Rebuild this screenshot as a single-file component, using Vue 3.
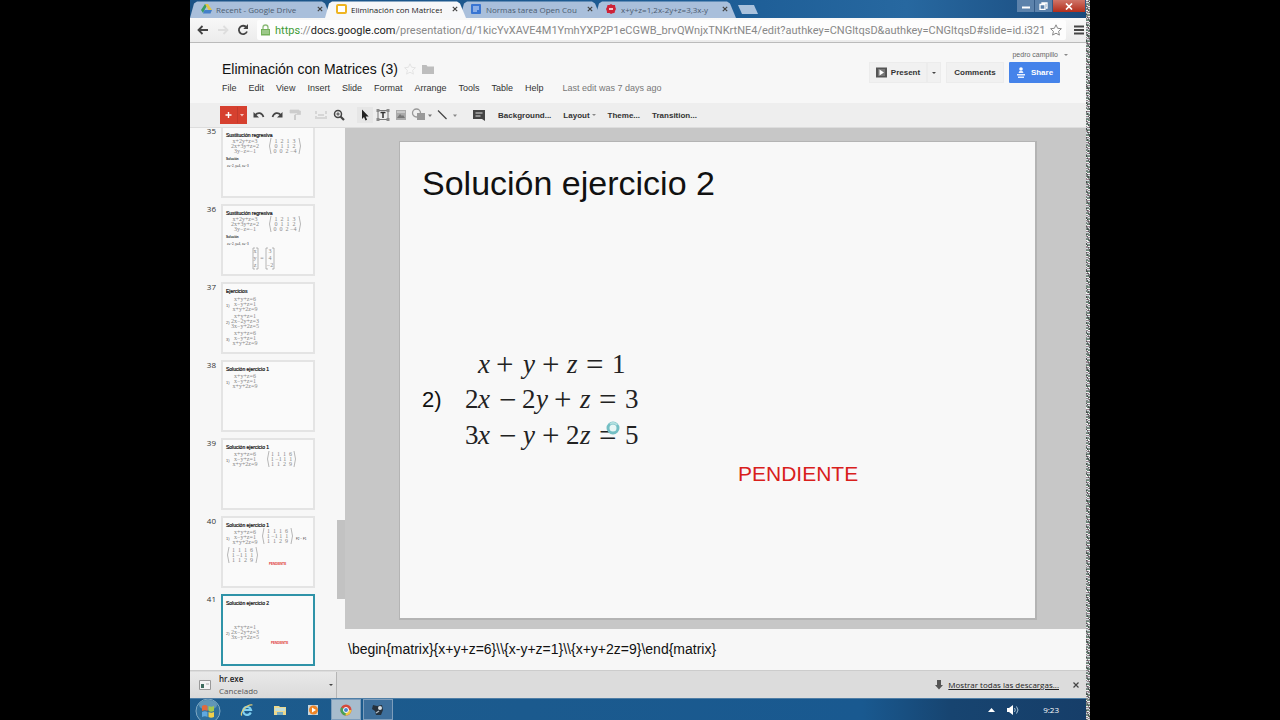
<script setup>
const tabs = [
  { title: 'Recent - Google Drive', icon: 'drive' },
  { title: 'Eliminación con Matrices', icon: 'slides', active: true },
  { title: 'Normas tarea Open Course', icon: 'docs' },
  { title: 'x+y+z=1,2x-2y+z=3,3x-y', icon: 'wolfram' }
]
const menus = ['File', 'Edit', 'View', 'Insert', 'Slide', 'Format', 'Arrange', 'Tools', 'Table', 'Help']

const sysA = ['x+2y+z=3', '2x+3y+z=2', '3y−z=−1']
const sysB = ['x+y+z=6', 'x−y+z=1', 'x+y+2z=9']
const sysC = ['x+y+z=1', '2x−2y+z=3', '3x−y+2z=5']
const matA = ['1  2  1  3', '0  1  1  2', '0  0  2 −4']
const matB = ['1  1  1  6', '1 −1 1  1', '1  1  2  9']
const thumbs = [
  { n: 35, title: 'Sustitución regresiva', systems: [{ x: 22, y: 15, rows: sysA }], matrices: [{ x: 46, y: 15, w: 32, rows: matA }], notes: true },
  { n: 36, title: 'Sustitución regresiva', systems: [{ x: 22, y: 15, rows: sysA }], matrices: [{ x: 46, y: 15, w: 32, rows: matA }], notes: true, vectors: true },
  { n: 37, title: 'Ejercicios', systems: [{ x: 22, y: 17, rows: sysB, label: '1)' }, { x: 22, y: 34, rows: sysC, label: '2)' }, { x: 22, y: 51, rows: sysB, label: '3)' }] },
  { n: 38, title: 'Solución ejercicio 1', systems: [{ x: 22, y: 16, rows: sysB, label: '1)' }] },
  { n: 39, title: 'Solución ejercicio 1', systems: [{ x: 22, y: 16, rows: sysB, label: '1)' }], matrices: [{ x: 44, y: 16, w: 29, rows: matB }] },
  { n: 40, title: 'Solución ejercicio 1', systems: [{ x: 22, y: 16, rows: sysB, label: '1)' }], matrices: [{ x: 39, y: 15, w: 31, rows: matB }, { x: 4, y: 34, w: 31, rows: matB }], arrow: true, pending: { x: 46, y: 47 } },
  { n: 41, title: 'Solución ejercicio 2', systems: [{ x: 22, y: 33, rows: sysC, label: '2)' }], pending: { x: 48, y: 48 }, selected: true }
]
const vector = [[33, 'x'], [47, '3']]
const vectorRows = [['x', '=', '3'], ['y', '=', '4'], ['z', '', '−2']]
const equations = [
  { y: 28, parts: [[17, 'x'], [35, '+'], [62, 'y'], [81, '+'], [106, 'z'], [125, '='], [151, '1']] },
  { y: 63, parts: [[4, '2'], [17, 'x'], [38, '−'], [61, '2'], [75, 'y'], [93, '+'], [119, 'z'], [138, '='], [164, '3']] },
  { y: 99, parts: [[4, '3'], [17, 'x'], [38, '−'], [62, 'y'], [81, '+'], [105, '2'], [119, 'z'], [138, '='], [164, '5']] }
]
const isVar = (s) => /[xyz]/.test(s)
const isOp = (s) => /[+−=]/.test(s)
</script>

<template>
  <div class="screen">
    <div class="desktop">
      <header class="tabstrip">
        <div v-for="t in tabs" :key="t.title" class="tab" :class="{ active: t.active }">
          <svg v-if="t.icon === 'drive'" width="11" height="10" viewBox="0 0 11 10"><path d="M4 0h3L3.500 6 2 9 0 6z" fill="#3a9e63" /><path d="M7 0l4 6H7.500L4 0z" fill="#e3c545" /><path d="M3.500 6H11L9.500 9.500H2z" fill="#4480c9" /></svg>
          <svg v-else-if="t.icon === 'slides'" width="11" height="10" viewBox="0 0 11 10"><rect x="1" y="1" width="9" height="8" rx="1" fill="#fff" stroke="#eeb422" stroke-width="2" /></svg>
          <svg v-else-if="t.icon === 'docs'" width="11" height="10" viewBox="0 0 11 10"><rect width="10" height="10" rx="1" fill="#3975d2" /><path d="M2 3h6M2 5h6M2 7h4" stroke="#dce8fb" /></svg>
          <svg v-else width="11" height="10" viewBox="0 0 11 10"><path d="M5 0l1.500 1L9 1l.3 2L10 5l-1 2-.5 2-2 .2L5 10l-1.500-1L1 9 .8 7 0 5l1-2L1.500 1l2 0z" fill="#ce2137" /><path d="M3 5h4" stroke="#fff" stroke-width="1.500" /></svg>
          <span class="tab-title">{{ t.title }}</span>
          <button class="tab-close" aria-label="Close tab"><svg width="6" height="6" viewBox="0 0 6 6"><path d="M.8.8l4.400 4.400M5.200.8L.8 5.200" stroke="#444" stroke-width="1.200" /></svg></button>
        </div>
        <button class="new-tab" aria-label="New tab"></button>
        <div class="window-controls">
          <button aria-label="Minimize"><svg width="8" height="8" viewBox="0 0 8 8"><path d="M0 5.500h8" stroke="#fff" stroke-width="2" /></svg></button>
          <button aria-label="Restore"><svg width="9" height="8" viewBox="0 0 9 8"><path d="M3 2V1h5v5H7M1 2.500h5v5H1z" fill="none" stroke="#fff" stroke-width="1.300" /></svg></button>
          <button class="close" aria-label="Close"><svg width="8" height="7" viewBox="0 0 8 7"><path d="M1 .5l6 6M7 .5l-6 6" stroke="#fff" stroke-width="1.700" /></svg></button>
        </div>
      </header>

      <nav class="navbar">
        <button aria-label="Back"><svg width="12" height="10" viewBox="0 0 12 10"><path d="M11 5H2M5.500 1L1.500 5l4 4" fill="none" stroke="#444" stroke-width="1.800" /></svg></button>
        <button aria-label="Forward"><svg width="12" height="10" viewBox="0 0 12 10"><path d="M1 5h9M6.500 1l4 4-4 4" fill="none" stroke="#dedede" stroke-width="1.800" /></svg></button>
        <button aria-label="Reload"><svg width="12" height="12" viewBox="0 0 12 12"><path d="M9.500 3.500A4.200 4.200 0 1 0 10 7.500" fill="none" stroke="#444" stroke-width="1.800" /><path d="M11 0v5H6.300z" fill="#444" /></svg></button>
        <div class="omnibox">
          <svg width="9" height="12" viewBox="0 0 9 12"><path d="M2 6V3.500a2.500 2.500 0 0 1 5 0V6" fill="none" stroke="#8dbb79" stroke-width="1.300" /><rect y="5" width="9" height="6.500" fill="#74b05a" /><path d="M1 7h7M1 9h7" stroke="#c4dfb8" /></svg>
          <a class="url" href="#"><span class="secure">https</span>://<span class="host">docs.google.com</span>/presentation/d/1kicYvXAVE4M1YmhYXP2P1eCGWB_brvQWnjxTNKrtNE4/edit?authkey=CNGltqsD&amp;authkey=CNGltqsD#slide=id.i321</a>
          <svg class="bookmark" width="12" height="12" viewBox="0 0 12 12"><path d="M6 .8l1.600 3.500 3.800.4-2.800 2.600.8 3.800L6 9.200l-3.400 1.900.8-3.800L.6 4.700l3.800-.4z" fill="#fff" stroke="#888" /></svg>
        </div>
        <button aria-label="Chrome menu"><svg width="10" height="10" viewBox="0 0 10 10"><path d="M0 1.500h10M0 5h10M0 8.500h10" stroke="#444" stroke-width="2" /></svg></button>
      </nav>

      <section class="doc-header">
        <div class="doc-main">
          <div class="doc-title">
            <h1>Eliminación con Matrices (3)</h1>
            <svg width="12" height="12" viewBox="0 0 12 12"><path d="M6 .8l1.600 3.500 3.800.4-2.800 2.600.8 3.800L6 9.200l-3.400 1.900.8-3.800L.6 4.700l3.800-.4z" fill="#f8f8f8" stroke="#e4e4e4" /></svg>
            <svg width="12" height="10" viewBox="0 0 12 10"><path d="M0 1h4.500l1 1.500H12V10H0z" fill="#bdbdbd" /></svg>
          </div>
          <div class="menubar">
            <button v-for="m in menus" :key="m">{{ m }}</button>
            <span class="last-edit">Last edit was 7 days ago</span>
          </div>
        </div>
        <div class="doc-side">
          <button class="user">pedro campillo <i class="caret"></i></button>
          <div class="actions">
            <div class="split">
              <button class="gray present"><svg width="11" height="11" viewBox="0 0 11 11"><path d="M0 .5h11v10H0z" fill="#555" /><path d="M2 2h7v7H2z" fill="#777" /><path d="M3.500 2.500l4.500 3-4.500 3z" fill="#fff" /></svg>Present</button>
              <button class="gray drop" aria-label="Present options"><i class="caret dark"></i></button>
            </div>
            <button class="gray comments">Comments</button>
            <button class="share"><svg width="10" height="12" viewBox="0 0 10 12"><circle cx="5" cy="2" r="1.800" fill="#fff" /><path d="M2.500 6l1-2h3l1 2zM1 7h8v1.500H1zM2 9.500h6V11H2z" fill="#e6efff" /></svg>Share</button>
          </div>
        </div>
      </section>

      <div class="toolbar">
        <button class="new-slide" aria-label="New slide"><svg width="25" height="16" viewBox="0 0 25 16"><path d="M7.500 5v6M4.500 8h6" stroke="#fff" stroke-width="1.400" /><path d="M16.500 0v16" stroke="#c23a2c" /><path d="M19 7h4l-2 2.500z" fill="#f6c5be" /></svg></button>
        <div class="group">
          <button aria-label="Undo"><svg width="16" height="16" viewBox="0 0 16 16"><path d="M4 8c3-3 7-2.500 8.500 2" fill="none" stroke="#444" stroke-width="1.700" /><path d="M2.500 5v5.500H8z" fill="#444" /></svg></button>
          <button aria-label="Redo"><svg width="16" height="16" viewBox="0 0 16 16"><path d="M12 8C9 5 5 5.500 3.500 10" fill="none" stroke="#444" stroke-width="1.700" /><path d="M13.500 5v5.500H8z" fill="#444" /></svg></button>
          <button aria-label="Paint format"><svg width="16" height="16" viewBox="0 0 16 16"><path d="M3 3h9v3H3zM12 4h1.500v3.500H8V9" fill="#ccc" stroke="#ccc" stroke-width=".7" /><path d="M7 8h2v5H7z" fill="#ccc" /></svg></button>
        </div>
        <div class="group">
          <button aria-label="Fit"><svg width="16" height="16" viewBox="0 0 16 16"><path d="M3 4v3M13 4v3M3 9v3M13 9v3M5 8h6M4 11h8" fill="none" stroke="#d6d6d6" stroke-width="2" /></svg></button>
          <button aria-label="Zoom"><svg width="16" height="16" viewBox="0 0 16 16"><circle cx="7" cy="7" r="3.500" fill="none" stroke="#444" stroke-width="1.500" /><path d="M5.300 7h3.400M7 5.300v3.400" stroke="#444" /><path d="M9.500 9.500l3.500 3.500" stroke="#444" stroke-width="2.200" /></svg></button>
        </div>
        <div class="group">
          <button class="pressed" aria-label="Select"><svg width="16" height="16" viewBox="0 0 16 16"><path d="M5 2.500v9.500l2-2 1.500 3.500 1.600-.7L8.700 9.500h3z" fill="#222" /></svg></button>
          <button aria-label="Text box"><svg width="16" height="16" viewBox="0 0 16 16"><path d="M3 3.500h10v9H3z" fill="none" stroke="#777" /><path d="M1.500 2h3v3h-3zM11.500 2h3v3h-3zM1.500 11h3v3h-3zM11.500 11h3v3h-3z" fill="#888" /><path d="M5.500 5.500h5M8 5.500v5.500" stroke="#333" stroke-width="1.500" /></svg></button>
          <button aria-label="Image"><svg width="16" height="16" viewBox="0 0 16 16"><path d="M3 3h10v10H3z" fill="#aaa" /><path d="M4 11l3-4 2 2 1-1 2 3z" fill="#777" /><path d="M4 4h8v2H4z" fill="#c8c8c8" /></svg></button>
          <button aria-label="Shape"><svg width="22" height="16" viewBox="0 0 22 16"><circle cx="5.500" cy="6" r="4" fill="#eee" stroke="#999" stroke-width="1.300" /><path d="M6 6h8v7H6z" fill="#999" /><path d="M17 7.500h4L19 10z" fill="#777" /></svg></button>
          <button aria-label="Line"><svg width="22" height="16" viewBox="0 0 22 16"><path d="M3 3.500l8.500 8.500" stroke="#444" stroke-width="1.300" /><path d="M18 7.500h4L20 10z" fill="#888" /></svg></button>
        </div>
        <button class="comment" aria-label="Comment"><svg width="16" height="16" viewBox="0 0 16 16"><path d="M2 3h12v11l-3-2H2z" fill="#444" /><path d="M4.500 6h7M4.500 9h5" stroke="#ddd" stroke-width="1.200" /></svg></button>
        <div class="labels">
          <button>Background...</button>
          <button>Layout <i class="caret"></i></button>
          <button>Theme...</button>
          <button>Transition...</button>
        </div>
      </div>

      <main class="workspace">
        <aside class="filmstrip">
          <ol>
            <li v-for="t in thumbs" :key="t.n">
              <span class="num">{{ t.n }}</span>
              <svg class="thumb" :class="{ selected: t.selected }" viewBox="0 0 90 68">
                <text class="t-title" x="3" y="9">{{ t.title }}</text>
                <g v-for="(s, i) in t.systems" :key="i">
                  <text v-if="s.label" class="t-label" x="3" :y="s.y + 6">{{ s.label }}</text>
                  <text v-for="(r, j) in s.rows" :key="j" class="t-eq" :x="s.x" :y="s.y + j * 5" text-anchor="middle">{{ r }}</text>
                </g>
                <g v-for="(m, i) in t.matrices" :key="'m' + i">
                  <path :d="`M${m.x + 2} ${m.y - 5}q-3 8 0 16M${m.x + m.w - 2} ${m.y - 5}q3 8 0 16`" class="bracket" />
                  <text v-for="(r, j) in m.rows" :key="j" class="t-eq" :x="m.x + m.w / 2" :y="m.y + j * 5" text-anchor="middle">{{ r }}</text>
                </g>
                <g v-if="t.notes">
                  <text class="t-note" x="3" y="32">Solución</text>
                  <text class="t-small" x="4" y="39">z=−2, y=4, x=−3</text>
                </g>
                <g v-if="t.vectors">
                  <path d="M32 42h-2v21h2M33 42h2v21h-2M45 42h-2v21h2M49 42h2v21h-2" class="bracket" />
                  <g v-for="(r, j) in vectorRows" :key="j" text-anchor="middle">
                    <text class="t-eq" x="32" :y="47 + j * 7">{{ r[0] }}</text>
                    <text v-if="j === 1" class="t-eq" x="39" :y="47 + j * 7">{{ r[1] }}</text>
                    <text class="t-eq" x="47" :y="47 + j * 7">{{ r[2] }}</text>
                  </g>
                </g>
                <text v-if="t.arrow" class="t-small" x="73" y="22">F2 − F1</text>
                <text v-if="t.pending" class="t-pending" :x="t.pending.x" :y="t.pending.y">PENDIENTE</text>
              </svg>
            </li>
          </ol>
          <div class="scroll-thumb"></div>
        </aside>

        <div class="editor">
          <div class="canvas">
            <article class="slide">
              <h2>Solución ejercicio 2</h2>
              <div class="exercise">
                <span>2)</span>
                <svg class="math" width="184" height="110" viewBox="0 0 184 110">
                  <g v-for="e in equations" :key="e.y">
                    <text v-for="p in e.parts" :key="p[0]" :class="{ var: isVar(p[1]), op: isOp(p[1]) }" :x="p[0]" :y="isOp(p[1]) ? e.y + 2 : e.y">{{ p[1] }}</text>
                  </g>
                  <circle cx="152" cy="83" r="5" fill="#e8f7f6" stroke="#74bfc4" stroke-width="3" /><path d="M149 79a5 5 0 0 1 7 1" fill="none" stroke="#b3e0e0" stroke-width="2" />
                </svg>
              </div>
              <p class="pending">PENDIENTE</p>
            </article>
          </div>
          <p class="speaker-notes">\begin{matrix}{x+y+z=6}\\{x-y+z=1}\\{x+y+2z=9}\end{matrix}</p>
        </div>
      </main>

      <div class="downloads">
        <button class="download">
          <svg width="12" height="10" viewBox="0 0 12 10"><path d="M.5.5h11v9H.5z" fill="#f4f4f4" stroke="#999" /><path d="M2 4h3v4H2z" fill="#3e6c5e" /><path d="M7 4h3" stroke="#aaa" /></svg>
          <span class="file"><b>hr.exe</b><span>Cancelado</span></span>
          <i class="caret dark"></i>
        </button>
        <a class="show-all" href="#"><svg width="8" height="10" viewBox="0 0 8 10"><path d="M2 0h4v5h2L4 9.500 0 5h2z" fill="#555" /></svg><span>Mostrar todas las descargas...</span></a>
        <button class="dismiss" aria-label="Close downloads"><svg width="6" height="6" viewBox="0 0 6 6"><path d="M.5.5l5 5M5.500.5l-5 5" stroke="#444" stroke-width="1.200" /></svg></button>
      </div>

      <footer class="taskbar">
        <button class="start" aria-label="Start"><svg width="28" height="22" viewBox="0 0 28 22"><circle cx="14" cy="12" r="12" fill="#2f6f9c" stroke="#7fa9c4" /><ellipse cx="14" cy="6" rx="9" ry="5" fill="#83b0ca" opacity=".6" /><path d="M8 7q3-2 5.500 0v5Q11 10.500 8 12z" fill="#e2693d" /><path d="M14.500 7q3 1.500 5.500 0v5q-3 1.500-5.500 0z" fill="#a3c94e" /><path d="M8 13q3-1.500 5.500 0v5Q11 16.500 8 18z" fill="#5fa8e0" /><path d="M14.500 13q3 1.500 5.500 0v5q-3 1.500-5.500 0z" fill="#f2cf4a" /></svg></button>
        <button class="launch" aria-label="Internet Explorer"><svg width="14" height="14" viewBox="0 0 14 14"><path d="M10.800 9.500A4 4 0 1 1 11 7H4" fill="none" stroke="#7fd0f2" stroke-width="2.200" /><path d="M2 12.500C-1 11 6 1 12.500 2" fill="none" stroke="#e3cc74" stroke-width="1.200" /></svg></button>
        <button class="launch" aria-label="Explorer"><svg width="14" height="14" viewBox="0 0 14 14"><path d="M1 3h5l1 1h6v8H1z" fill="#ecd98e" /><path d="M2 5h10v3H2z" fill="#c4dfd9" /><path d="M4 9h6v3H4z" fill="#76adc8" /></svg></button>
        <button class="launch" aria-label="Media player"><svg width="14" height="14" viewBox="0 0 14 14"><path d="M2 2h10v10H2z" fill="#c7d6dd" /><circle cx="7.500" cy="7" r="4.500" fill="#ed8527" /><path d="M6 4.500l4 2.500-4 2.500z" fill="#fff" /></svg></button>
        <button class="task lit" aria-label="Chrome"><svg width="12" height="12" viewBox="0 0 12 12"><circle cx="6" cy="6" r="5.500" fill="#d64a3c" /><path d="M6 6L1.200 3.200A5.500 5.500 0 0 0 6 11.500z" fill="#47a257" /><path d="M6 6h5.500A5.500 5.500 0 0 1 5.500 11.500z" fill="#efc941" /><circle cx="6" cy="6" r="2.500" fill="#4a83cc" stroke="#fff" /></svg></button>
        <button class="task" aria-label="Recorder"><svg width="14" height="12" viewBox="0 0 14 12"><path d="M2 1l4 1 5-1 1 5-2 5H5L4 7 1 5z" fill="#26313c" /><circle cx="9" cy="4" r="2" fill="#d9dfe3" /><path d="M5 9l3-2" stroke="#aab7c2" stroke-width="1.500" /></svg></button>
        <div class="tray">
          <svg width="7" height="4" viewBox="0 0 7 4"><path d="M0 4l3.500-4L7 4z" fill="#fff" /></svg>
          <svg width="12" height="10" viewBox="0 0 12 10"><path d="M0 3h2l4-3v10L2 7H0z" fill="#fff" /><path d="M7.500 3q1.500 2 0 4M9.500 1.500q3 3.500 0 7" fill="none" stroke="#a8c3d6" /></svg>
          <time>9:23</time>
        </div>
      </footer>
    </div>
    <div class="noise"></div>
  </div>
</template>

<style>
body {
  margin: 0;
  background: #000;
}
</style>

<style scoped>
* {
  box-sizing: border-box;
}
.screen {
  display: flex;
  min-height: 100vh;
  padding: 0 190px;
  background: #000;
  font-family: "Liberation Sans", Arial, sans-serif;
  color: #333;
}
.desktop {
  flex: 1;
  min-width: 0;
  display: flex;
  flex-direction: column;
  background: #f7f7f7;
}
.noise {
  width: 4px;
  background:
    repeating-linear-gradient(63deg, #0006 0 1px, #0000 1px 4px),
    repeating-linear-gradient(17deg, #888 0 1px, #cdd 1px 2px, #96808d 2px 3px, #eee 3px 4px, #678677 4px 5px);
}
button {
  display: flex;
  align-items: center;
  border: 0;
  padding: 0;
  background: none;
  font: inherit;
  color: inherit;
  white-space: nowrap;
}
svg {
  display: block;
  flex: none;
}
.caret {
  border: 2px solid transparent;
  border-top-color: #888;
  border-bottom: 0;
}
.caret.dark {
  border-top-color: #444;
}

.tabstrip {
  display: flex;
  height: 18px;
  background: linear-gradient(90deg, #1b5285, #1d5d96 60%, #2768a0 80%, #1a4a7c);
  font: 8px "Open Sans", "Noto Sans", sans-serif;
}
.tab {
  display: flex;
  align-items: center;
  width: 141px;
  margin-right: -6px;
  padding: 0 8px 0 11px;
  clip-path: polygon(0 100%, 4px 20%, 7px 8%, calc(100% - 9px) 8%, calc(100% - 6px) 20%, 100% 100%);
  background: #a9bfdb;
  color: #4c5c70;
}
.tab.active {
  z-index: 1;
  background: #f6f7f9;
  color: #222;
}
.tab-title {
  flex: 1;
  margin: 0 10px 0 4px;
  overflow: hidden;
  white-space: nowrap;
}
.new-tab {
  width: 20px;
  height: 9px;
  margin: 5px 0 0 8px;
  background: #a9c1dc;
  clip-path: polygon(0 0, 80% 0, 100% 100%, 20% 100%);
}
.window-controls {
  display: flex;
  height: 12px;
  margin-left: auto;
}
.window-controls button {
  width: 18px;
  justify-content: center;
  background: #5c82ab;
  border-right: 1px solid #345a86;
}
.window-controls .close {
  width: 33px;
  background: linear-gradient(#cf7468, #b22d1b);
}

.navbar {
  display: flex;
  align-items: center;
  gap: 8px;
  height: 25px;
  padding: 0 2px 0 7px;
  background: linear-gradient(#f8f8f8, #ececec);
  border-bottom: 1px solid #bbb;
}
.omnibox {
  display: flex;
  flex: 1;
  align-items: center;
  min-width: 0;
  height: 20px;
  padding: 0 4px;
  background: #fdfdfd;
  border-radius: 2px;
}
.url {
  flex: 1;
  margin-left: 5px;
  overflow: hidden;
  white-space: nowrap;
  font: 11px Roboto, "Open Sans", sans-serif;
  color: #888;
  text-decoration: none;
}
.secure {
  color: #3f9b35;
}
.host {
  color: #222;
}

.doc-header {
  display: flex;
  justify-content: space-between;
  height: 60px;
  padding: 0 26px 0 32px;
}
.doc-title {
  display: flex;
  align-items: center;
  gap: 6px;
  margin-top: 18px;
}
h1 {
  margin: 0;
  font-size: 14px;
  line-height: 16px;
  font-weight: 400;
  color: #111;
}
.menubar {
  display: flex;
  gap: 12px;
  margin-top: 5px;
  font-size: 9px;
  line-height: 12px;
}
.last-edit {
  margin-left: 7px;
  color: #777;
}
.doc-side {
  display: flex;
  flex-direction: column;
  align-items: flex-end;
  font-size: 8px;
}
.user {
  gap: 6px;
  margin: 7px -8px 0 0;
  font-size: 7px;
  line-height: 10px;
  color: #666;
}
.actions {
  display: flex;
  gap: 5px;
  margin-top: 2px;
  font-weight: 700;
}
.actions button {
  height: 21px;
  justify-content: center;
}
.split {
  display: flex;
}
.gray {
  background: #f1f1f1;
  border: 1px solid #ececec;
}
.present {
  gap: 4px;
  width: 58px;
}
.drop {
  width: 14px;
}
.comments {
  width: 58px;
}
.share {
  gap: 5px;
  width: 51px;
  border-radius: 1px;
  background: #4583ea;
  color: #fff;
}

.toolbar {
  display: flex;
  align-items: center;
  height: 25px;
  padding-left: 30px;
  background: #eee;
  border-bottom: 1px solid #ddd;
  font-size: 8px;
  font-weight: 700;
}
.new-slide {
  width: 27px;
  height: 18px;
  justify-content: center;
  margin-right: 4px;
  background: #d6402f;
}
.group {
  display: flex;
  gap: 2px;
  margin-right: 10px;
}
.pressed {
  background: #e6e6e6;
}
.comment {
  margin-left: 4px;
}
.labels {
  display: flex;
  gap: 12px;
  margin-left: 11px;
}
.labels button {
  gap: 2px;
}

.workspace {
  flex: 1;
  display: flex;
}
.filmstrip {
  position: relative;
  width: 155px;
  overflow: hidden;
}
.filmstrip ol {
  display: flex;
  flex-direction: column;
  gap: 6px;
  margin: -2px 0 4px;
  padding: 0;
  list-style: none;
}
.filmstrip li {
  display: flex;
  height: 72px;
}
.num {
  width: 31px;
  padding-right: 5px;
  text-align: right;
  font: 8px/10px "Open Sans", "Noto Sans", sans-serif;
}
.thumb {
  width: 94px;
  height: 72px;
  background: #fafafa;
  border: 2px solid #e4e4e4;
}
.thumb.selected {
  border-color: #2f93a8;
}
.thumb text {
  font-family: "Liberation Sans", Arial, sans-serif;
}
.thumb .t-title {
  font-size: 5px;
  fill: #111;
  stroke: #111;
  stroke-width: 0.2px;
}
.thumb .t-label {
  font-size: 4px;
  fill: #555;
}
.thumb .t-note {
  font-size: 3px;
  font-weight: 700;
  fill: #222;
}
.thumb .t-small {
  font-size: 3px;
  fill: #333;
}
.thumb .t-eq {
  font-family: "Liberation Serif", serif;
  font-size: 6px;
  fill: #888;
  white-space: pre;
}
.thumb .t-pending {
  font-size: 3px;
  font-weight: 700;
  fill: #d33;
}
.bracket {
  fill: none;
  stroke: #999;
  stroke-width: 0.7px;
}
.scroll-thumb {
  position: absolute;
  right: 0;
  bottom: 71px;
  width: 8px;
  height: 79px;
  background: #c2c2c2;
}
.editor {
  flex: 1;
  display: flex;
  flex-direction: column;
  min-width: 0;
}
.canvas {
  flex: 1;
  display: flex;
  padding: 13px 49px 9px 54px;
  background: #c7c7c7;
}
.slide {
  flex: 1;
  padding: 21px 22px;
  background: #f8f8f8;
  border: 1px solid #b4b4b4;
  border-width: 1px 2px 2px 1px;
  color: #111;
  font-size: 22px;
}
h2 {
  margin: 0;
  font-size: 34px;
  line-height: 40px;
  font-weight: 400;
}
.exercise {
  display: flex;
  align-items: center;
  gap: 19px;
  margin-top: 142px;
}
.math text {
  font: 27px "Liberation Serif", "Times New Roman", serif;
  fill: #222;
}
.math .var {
  font-style: italic;
}
.math .op {
  font-size: 31px;
}
.pending {
  width: max-content;
  margin: 7px 0 0 316px;
  font-size: 21px;
  line-height: 24px;
  color: #d8201c;
}
.speaker-notes {
  margin: 0;
  padding: 11px 3px;
  font-size: 14px;
  line-height: 19px;
  color: #111;
}

.downloads {
  display: flex;
  align-items: center;
  height: 28px;
  padding-right: 7px;
  background: #dcdcdc;
  border-top: 1px solid #ccc;
  font: 8px "Open Sans", "Noto Sans", sans-serif;
}
.download {
  width: 147px;
  height: 26px;
  padding: 0 3px 0 9px;
  background: linear-gradient(#e9e9e9, #dadada);
  border-right: 1px solid #b5b5b5;
  text-align: left;
}
.file {
  display: flex;
  flex: 1;
  flex-direction: column;
  margin-left: 8px;
  line-height: 12px;
  color: #555;
}
.file b {
  font-weight: 600;
  color: #222;
}
.show-all {
  display: flex;
  align-items: center;
  gap: 5px;
  margin-left: auto;
  color: #222;
}
.dismiss {
  margin-left: 14px;
}

.taskbar {
  display: flex;
  height: 22px;
  padding-left: 4px;
  background: linear-gradient(90deg, #1d5b8c, #195990 75%, #174470 85%, #163e69);
  border-top: 1px solid #4f7ea6;
}
.start {
  width: 28px;
  overflow: hidden;
  margin-right: 8px;
}
.launch {
  width: 33px;
  justify-content: center;
}
.task {
  width: 30px;
  margin-left: 2px;
  justify-content: center;
  background: #3d6f9c;
  border: 1px solid #7d9dbb;
}
.task.lit {
  background: #a7bccd;
}
.tray {
  display: flex;
  align-items: center;
  gap: 12px;
  margin-left: auto;
  padding-right: 27px;
  color: #fff;
  font: 8px "Open Sans", "Noto Sans", sans-serif;
}
.tray time {
  margin-left: 12px;
}
</style>
